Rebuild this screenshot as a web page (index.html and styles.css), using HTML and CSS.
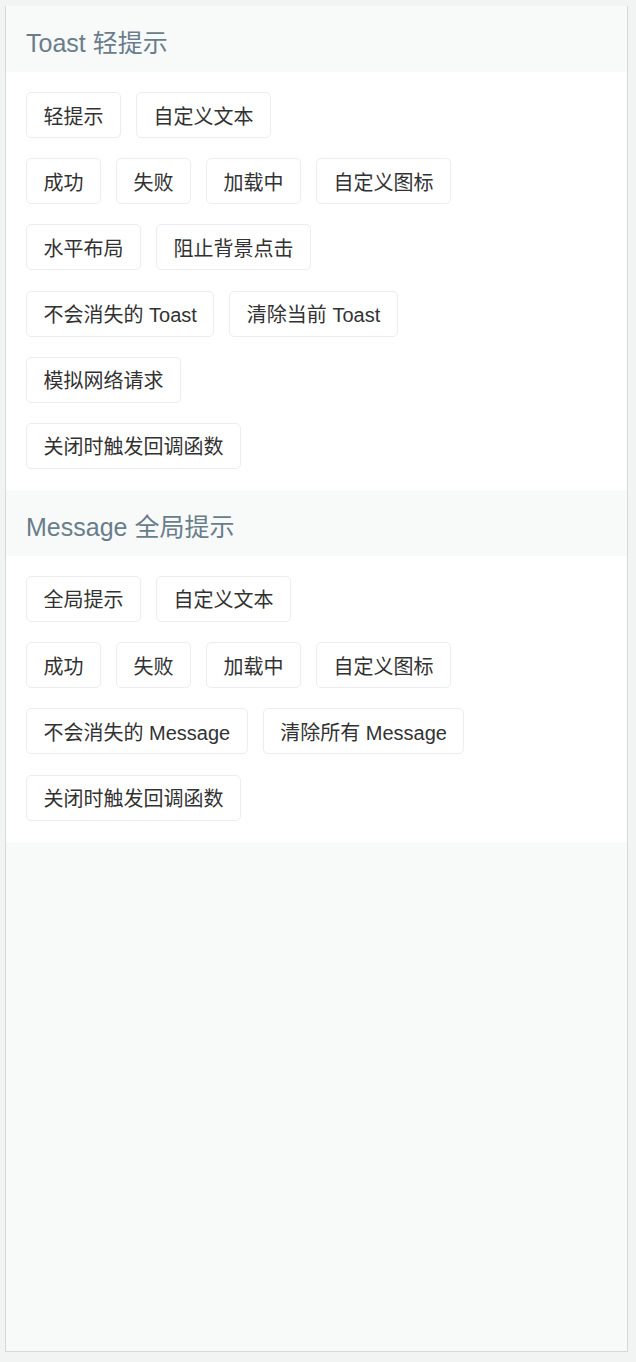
FILE: index.html
```html
<!DOCTYPE html>
<html lang="zh-CN">
<head>
  <meta charset="UTF-8">
  <meta name="viewport" content="width=device-width, initial-scale=1.0">
  <title>Toast 轻提示</title>
  <link rel="stylesheet" href="styles.css">
</head>
<body>

  <div class="frame">

    <!-- Toast -->
    <h2 class="demo-title">Toast 轻提示</h2>
    <div class="demo-block">
      <div class="row">
        <button>轻提示</button>
        <button>自定义文本</button>
      </div>
      <div class="row">
        <button>成功</button>
        <button>失败</button>
        <button>加载中</button>
        <button>自定义图标</button>
      </div>
      <div class="row">
        <button>水平布局</button>
        <button>阻止背景点击</button>
      </div>
      <div class="row">
        <button>不会消失的 Toast</button>
        <button>清除当前 Toast</button>
      </div>
      <div class="row">
        <button>模拟网络请求</button>
      </div>
      <div class="row">
        <button>关闭时触发回调函数</button>
      </div>
    </div>

    <!-- Message -->
    <h2 class="demo-title">Message 全局提示</h2>
    <div class="demo-block">
      <div class="row">
        <button>全局提示</button>
        <button>自定义文本</button>
      </div>
      <div class="row">
        <button>成功</button>
        <button>失败</button>
        <button>加载中</button>
        <button>自定义图标</button>
      </div>
      <div class="row">
        <button>不会消失的 Message</button>
        <button>清除所有 Message</button>
      </div>
      <div class="row">
        <button>关闭时触发回调函数</button>
      </div>
    </div>

  </div>

</body>
</html>
```

FILE: styles.css
```css
html, body {
  height: 100%;
}
body {
  margin: 0;
  padding: 6px 8px 10px 5px;
  box-sizing: border-box;
  background-color: #f2f3f3;
  font-family: "Liberation Sans", Arial, "Noto Sans CJK SC", sans-serif;
  color: #323233;
}
.frame {
  height: 100%;
  box-sizing: border-box;
  background-color: #f8fafa;
  border: 1px solid #d6d8d9;
  border-top: none;
}
.demo-title {
  margin: 0;
  height: 66px;
  box-sizing: border-box;
  padding: 4px 20px 0;
  display: flex;
  align-items: center;
  font-size: 25px;
  font-weight: normal;
  color: #6a7d8b;
}
.demo-block {
  background-color: #fff;
  padding: 20px 20px 21px;
  display: flex;
  flex-direction: column;
  gap: 20.2px;
}
.row {
  display: flex;
  gap: 15px;
}
button {
  height: 46px;
  padding: 0 16.5px;
  background-color: #fff;
  border: 1px solid #ebedf0;
  border-radius: 5px;
  font-family: "Liberation Sans", Arial, "Noto Sans CJK SC", sans-serif;
  font-size: 20px;
  color: #323233;
  cursor: pointer;
}
```
